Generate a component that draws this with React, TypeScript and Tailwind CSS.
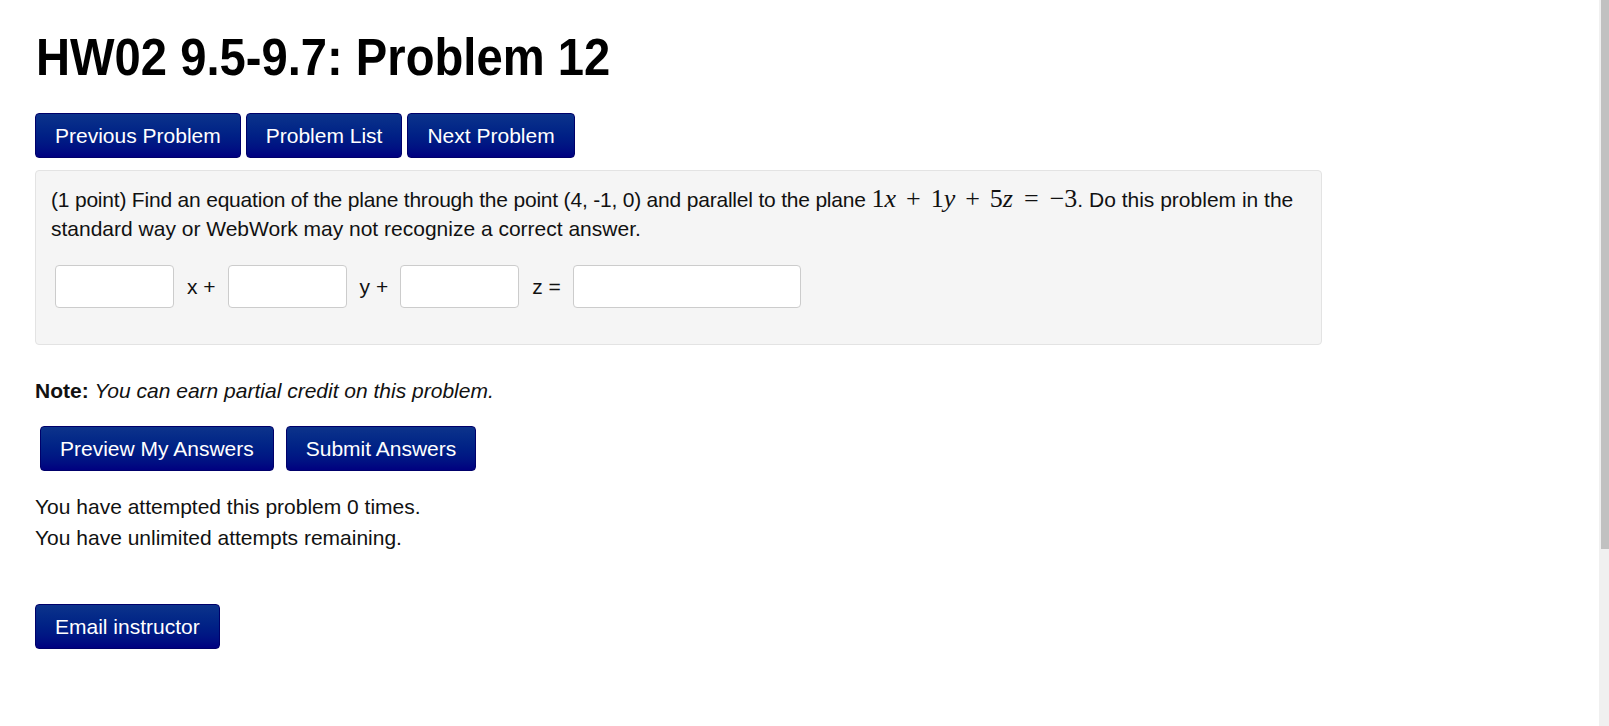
import { ReactNode } from "react";

// WeBWorK-style problem page

function NavButton({ children }: { children: ReactNode }) {
  return (
    <button
      type="button"
      className="rounded-[4px] border border-[#00006a] bg-gradient-to-b from-[#0d338b] to-[#000080] px-[19px] py-[9px] text-[21px] leading-[25px] text-white"
    >
      {children}
    </button>
  );
}

function AnswerBox({ wide }: { wide?: boolean }) {
  return (
    <input
      type="text"
      className={
        wide
          ? "h-[43px] w-[228px] rounded-[4px] border border-[#cccccc] bg-white px-2 text-[21px]"
          : "h-[43px] w-[119px] rounded-[4px] border border-[#cccccc] bg-white px-2 text-[21px]"
      }
    />
  );
}

function Math() {
  return (
    <span className="font-['Liberation_Serif','DejaVu_Serif',serif] text-[26px] leading-none">
      1<i>x</i>
      <span className="mx-[10px]">+</span>1<i>y</i>
      <span className="mx-[10px]">+</span>5<i>z</i>
      <span className="mx-[11px]">=</span>−3
    </span>
  );
}

export default function App() {
  return (
    <div className="flex h-[726px] w-full bg-white font-['Liberation_Sans',Arial,sans-serif] text-[21px] leading-[29px] text-[#111]">
      <main className="flex-1 px-[35px] pt-[28px]">
        <h1 className="ml-px origin-left scale-x-[0.925] text-[51px] font-bold leading-[60px] whitespace-nowrap text-black">
          HW02 9.5-9.7: Problem 12
        </h1>

        <div className="mt-[25px] flex gap-[5px]">
          <NavButton>Previous Problem</NavButton>
          <NavButton>Problem List</NavButton>
          <NavButton>Next Problem</NavButton>
        </div>

        <div className="mt-[12px] w-[1287px] rounded-[4px] border border-[#e3e3e3] bg-[#f5f5f5] px-[15px] pt-[14px] pb-[36px]">
          <p>
            <span className="tracking-[-0.2px]">
              (1 point) Find an equation of the plane through the point (4, -1, 0) and parallel to the plane{" "}
            </span>
            <Math />. Do this problem in the standard way or WebWork may not recognize a correct answer.
          </p>
          <div className="mt-[22px] ml-[4px] flex items-center">
            <AnswerBox />
            <span className="pl-[13px] pr-[12px]">x +</span>
            <AnswerBox />
            <span className="pl-[13px] pr-[12px]">y +</span>
            <AnswerBox />
            <span className="pl-[13px] pr-[12px]">z =</span>
            <AnswerBox wide />
          </div>
        </div>

        <p className="mt-[31px]">
          <b>Note:</b> <i>You can earn partial credit on this problem.</i>
        </p>

        <div className="mt-[21px] ml-[5px] flex gap-[12px]">
          <NavButton>Preview My Answers</NavButton>
          <NavButton>Submit Answers</NavButton>
        </div>

        <div className="mt-[20px] leading-[31px]">
          <p>You have attempted this problem 0 times.</p>
          <p>You have unlimited attempts remaining.</p>
        </div>

        <div className="mt-[51px]">
          <NavButton>Email instructor</NavButton>
        </div>
      </main>

      {/* scrollbar */}
      <div className="w-[10px] bg-[#f0f0f0] pl-[2px]">
        <div className="h-[549px] bg-[#c1c1c1]" />
      </div>
    </div>
  );
}
